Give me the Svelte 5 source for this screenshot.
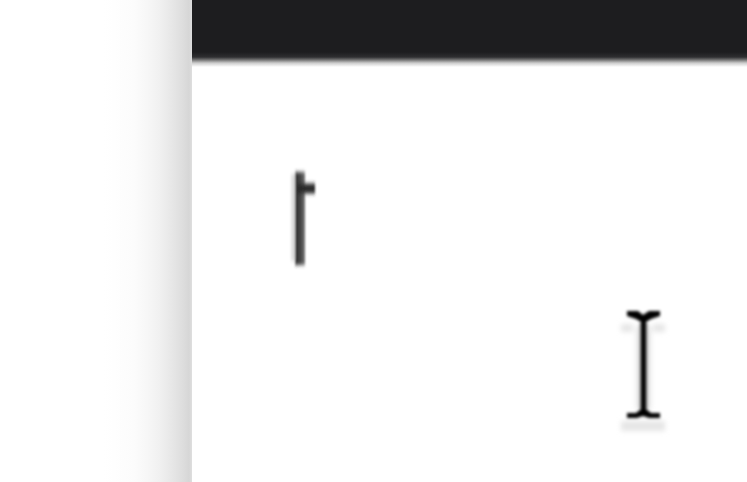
<script lang="ts">
	interface Props {
		label?: string;
	}

	let { label = 'Document' }: Props = $props();
</script>

<div class="desktop">
	<div class="window-shadow"></div>
	<main class="window" aria-label={label}>
		<header class="title-bar"></header>
		<section class="content">
			<svg class="mark" viewBox="0 0 32 108" aria-hidden="true">
				<defs>
					<linearGradient id="stem">
						<stop offset="0" stop-color="#303030" />
						<stop offset="0.55" stop-color="#444" />
						<stop offset="1" stop-color="#777" />
					</linearGradient>
					<filter id="soften" x="-50%" y="-20%" width="200%" height="140%">
						<feGaussianBlur stdDeviation="1.3 2" />
					</filter>
				</defs>
				<g filter="url(#soften)">
					<path d="M3 11h5v87H3z" fill="#dedede" />
					<path d="M7 9h10v93H7z" fill="url(#stem)" />
					<path d="M9 20.5h18v10H9z" fill="#2c2c2c" />
				</g>
			</svg>

			<svg class="pointer" viewBox="0 0 60 140" aria-hidden="true">
				<defs>
					<filter id="pointer-soft" x="-50%" y="-20%" width="200%" height="140%">
						<feGaussianBlur stdDeviation="1.5" />
					</filter>
					<filter id="pointer-shadow" x="-50%" y="-20%" width="200%" height="140%">
						<feGaussianBlur stdDeviation="2.4" />
					</filter>
				</defs>
				<g filter="url(#pointer-shadow)" fill="#e6e6e6">
					<path d="M23 25h15v83H23z" />
					<path d="M8 23h12v8H8zM40 23h12v8H40z" />
					<path d="M8 120h44v10H8z" />
				</g>
				<path d="M26 22h9v86h-9z" fill="#bbb" filter="url(#pointer-soft)" />
				<g filter="url(#pointer-soft)" fill="#000">
					<path d="M28 17h5v95h-5z" />
					<path d="M14 10h11l5 4 6-4h11v5l-9 3-5 3h-5l-5-3-9-3z" />
					<path d="M14 112h9l5-4h5l5 4h9v5H36l-6-2-6 2H14z" />
				</g>
			</svg>
		</section>
	</main>
</div>

<style>
	:global(body) {
		margin: 0;
		background: #fff;
	}

	.desktop {
		display: flex;
		min-height: 100vh;
		overflow: hidden;
	}

	.window-shadow {
		flex: 0 0 192px;
		background: linear-gradient(
			to right,
			#fff 104px,
			#fcfcfc 134px,
			#f7f7f7 147px,
			#f0f0f0 160px,
			#e6e6e6 173px,
			#dcdcdc 184px,
			#d6d6d6 189px,
			#dedede 192px
		);
	}

	.window {
		display: flex;
		flex: 1;
		flex-direction: column;
		background: #fff;
	}

	.title-bar {
		height: 67px;
		background: linear-gradient(
			to bottom,
			#1d1d1f 52px,
			#2e2e30 57px,
			#777 60px,
			#ccc 63px,
			#fff 67px
		);
	}

	.content {
		position: relative;
		flex: 1;
		padding: 96px;
	}

	.mark {
		display: block;
		width: 32px;
		height: 108px;
	}

	/* The text cursor floats over the page. */
	.pointer {
		position: absolute;
		top: 234px;
		left: 421px;
		width: 60px;
		height: 140px;
	}
</style>
